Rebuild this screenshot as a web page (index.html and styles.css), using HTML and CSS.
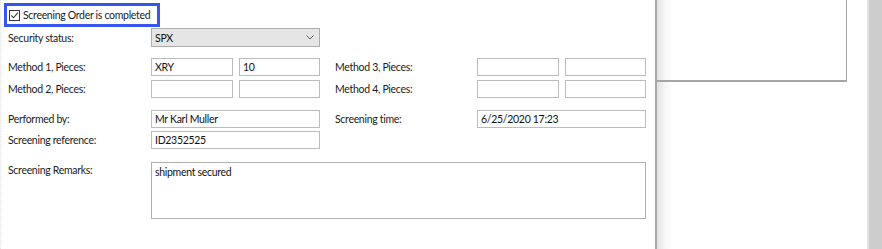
FILE: index.html
```html
<!DOCTYPE html>
<html>
<head>
<meta charset="utf-8">
<link rel="stylesheet" href="styles.css">
</head>
<body>
<div class="page">
  <div class="form">
    <div class="highlight">
      <svg class="check" width="11" height="11" viewBox="0 0 11 11"><rect x="0.5" y="0.5" width="10" height="10" fill="#fff" stroke="#333"/><path d="M2.2 5.4 L4.5 7.8 L8.9 2.7" fill="none" stroke="#333" stroke-width="1.1"/></svg>
      <span class="check-label">Screening Order is completed</span>
    </div>

    <div class="row r-select">
      <div class="label">Security status:</div>
      <div class="select c-wide">
        <span>SPX</span>
        <svg class="chev" width="8" height="5" viewBox="0 0 8 5"><path d="M0.5 0.5 L4 4 L7.5 0.5" fill="none" stroke="#606060" stroke-width="1"/></svg>
      </div>
    </div>

    <div class="row r-m1">
      <div class="label">Method 1, Pieces:</div>
      <div class="field c-a">XRY</div>
      <div class="field c-b">10</div>
      <div class="label c-l2">Method 3, Pieces:</div>
      <div class="field c-c"></div>
      <div class="field c-d"></div>
    </div>

    <div class="row r-m2">
      <div class="label">Method 2, Pieces:</div>
      <div class="field c-a"></div>
      <div class="field c-b"></div>
      <div class="label c-l2">Method 4, Pieces:</div>
      <div class="field c-c"></div>
      <div class="field c-d"></div>
    </div>

    <div class="row r-perf">
      <div class="label">Performed by:</div>
      <div class="field c-wide">Mr Karl Muller</div>
      <div class="label c-l2">Screening time:</div>
      <div class="field c-wide2">6/25/2020 17:23</div>
    </div>

    <div class="row r-ref">
      <div class="label">Screening reference:</div>
      <div class="field c-wide">ID2352525</div>
    </div>

    <div class="row r-rem">
      <div class="label label-top">Screening Remarks:</div>
      <div class="field area c-all">shipment secured</div>
    </div>
  </div>

  <div class="divider"></div>

  <div class="side">
    <div class="side-box"></div>
  </div>
  <div class="scrollbar"></div>
</div>
</body>
</html>
```

FILE: styles.css
```css
html, body {
  margin: 0;
  padding: 0;
  background: #ffffff;
}

body {
  font-family: Lato, "Noto Sans", sans-serif;
  font-size: 10.5px;
  letter-spacing: -0.3px;
  color: #1b1b1b;
}

.page {
  display: flex;
  width: 882px;
  height: 249px;
  overflow: hidden;
}

.form {
  width: 655px;
  flex: none;
  padding: 3px 0 0 3px;
  box-sizing: border-box;
  border-left: 1px dotted #e4e4e4;
}

.highlight {
  display: flex;
  align-items: center;
  width: 156px;
  height: 24px;
  box-sizing: border-box;
  border: 3px solid #3657ef;
  padding-left: 2px;
  background: #fff;
}

.check {
  flex: none;
  display: block;
}

.check-label {
  margin-left: 3px;
  white-space: nowrap;
}

.row {
  display: grid;
  grid-template-columns: 143px 82px 6px 81px 15px 142px 82px 6px 81px;
  padding-left: 4px;
  align-items: center;
}

.r-select { margin-top: 1px; height: 19px; }
.r-m1 { margin-top: 11px; height: 18px; }
.r-m2 { margin-top: 4px; height: 18px; }
.r-perf { margin-top: 12px; height: 18px; }
.r-ref { margin-top: 3px; height: 18px; }
.r-rem { margin-top: 13px; height: 57px; align-items: start; }

.label {
  grid-column: 1;
  white-space: nowrap;
}

.label-top {
  padding-top: 2px;
}

.c-l2 { grid-column: 6; }
.c-a { grid-column: 2; }
.c-b { grid-column: 4; }
.c-c { grid-column: 7; }
.c-d { grid-column: 9; }
.c-wide { grid-column: 2 / 5; }
.c-wide2 { grid-column: 7 / 10; }
.c-all { grid-column: 2 / 10; }

.field {
  height: 18px;
  box-sizing: border-box;
  border: 1px solid #bcbcbc;
  padding: 0 3px;
  line-height: 16px;
  color: #111;
  background: #fff;
  white-space: nowrap;
}

.area {
  height: 57px;
  line-height: 16px;
  padding-top: 1px;
  border-color: #b0b0b0;
}

.select {
  height: 19px;
  box-sizing: border-box;
  border: 1px solid #adadad;
  background: #e5e5e5;
  display: flex;
  align-items: center;
  justify-content: space-between;
  padding: 0 5px 0 3px;
  color: #111;
}

.chev {
  display: block;
}

.divider {
  width: 2px;
  flex: none;
  background: #a8a8a8;
}

.side {
  width: 190px;
  flex: none;
  background: linear-gradient(to right, #e3e3e3 0px, #f6f6f6 8px, #ffffff 16px);
}

.side-box {
  height: 82px;
  box-sizing: border-box;
  border-right: 1px solid #a6a6a6;
  border-bottom: 2px solid #a6a6a6;
}

.scrollbar {
  margin-left: auto;
  width: 15px;
  flex: none;
  box-sizing: border-box;
  background: #cdcdcd;
  border-left: 2px solid #e2e2e2;
}
```
